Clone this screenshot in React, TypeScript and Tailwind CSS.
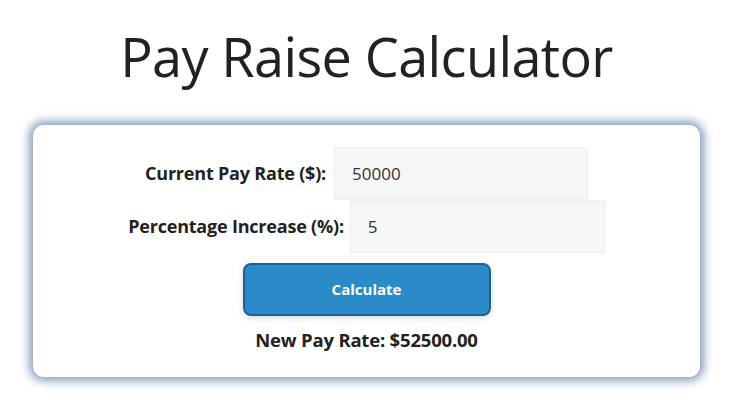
import { useState } from 'react'

const FONT = "font-['Open_Sans','Noto_Sans',sans-serif]"

export default function App() {
  const [rate, setRate] = useState('50000')
  const [pct, setPct] = useState('5')
  const [result, setResult] = useState<number | null>(52500)

  const calculate = () => {
    const r = Number(rate)
    const p = Number(pct)
    setResult(r + (r * p) / 100)
  }

  return (
    <div className={`min-h-screen bg-white pr-[13px] text-[#222] ${FONT}`}>
      <h1 className="pt-[23px] text-center text-[54px] font-normal leading-[66px] tracking-[-0.6px] text-[#222]">
        Pay Raise Calculator
      </h1>

      <div className="mx-[33px] mt-[36px] rounded-[11px] bg-white px-4 pt-[22px] pb-[25px] shadow-[0_0_10px_4px_rgba(55,95,145,0.6)]">
        <div className="flex items-center justify-center gap-[8px]">
          <label className="text-[18px] font-bold tracking-[-0.2px]">Current Pay Rate ($):</label>
          <input
            value={rate}
            onChange={(e) => setRate(e.target.value)}
            className="h-[53px] w-[254px] border border-[#eceef1] bg-[#f6f7f9] px-[17px] text-[17px] text-[#333] outline-none"
          />
        </div>
        <div className="flex items-center justify-center gap-[6px]">
          <label className="text-[18px] font-bold tracking-[-0.2px]">Percentage Increase (%):</label>
          <input
            value={pct}
            onChange={(e) => setPct(e.target.value)}
            className="h-[53px] w-[255px] border border-[#eceef1] bg-[#f6f7f9] px-[17px] text-[17px] text-[#333] outline-none"
          />
        </div>
        <div className="mt-[10px] flex justify-center">
          <button
            onClick={calculate}
            className="h-[53px] w-[248px] rounded-[8px] border-2 border-[#1d5e9b] bg-[#2a8bc8] text-[15px] font-bold text-white shadow-[0_2px_6px_rgba(0,0,0,0.15)]"
          >
            Calculate
          </button>
        </div>
        {result !== null && (
          <p className="mt-[11px] text-center text-[18.5px] font-bold leading-[25px] tracking-[-0.2px]">
            New Pay Rate: ${result.toFixed(2)}
          </p>
        )}
      </div>
    </div>
  )
}
